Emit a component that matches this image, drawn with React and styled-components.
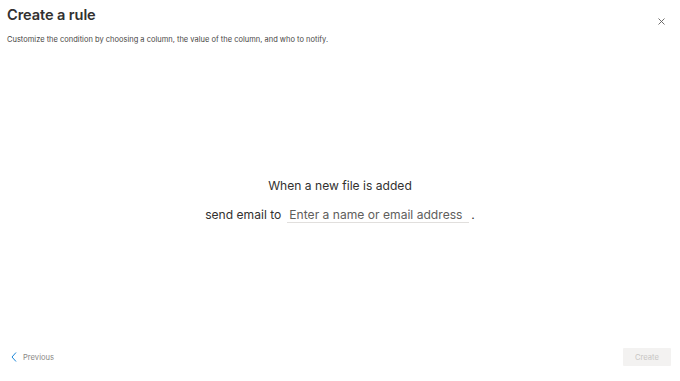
import React from 'react';
import styled, { createGlobalStyle } from 'styled-components';

const Global = createGlobalStyle`
 html, body, #root { margin: 0; padding: 0; height: 100%; }
 body { background: #fff; font-family: Inter, "Noto Sans", sans-serif; color: #323130; }
 * { box-sizing: border-box; }
`;

const Panel = styled.div`
 display: flex;
 flex-direction: column;
 height: 100vh;
`;

const Header = styled.div`
 display: flex;
 justify-content: space-between;
 align-items: flex-start;
 padding: 5px 14px 0 7px;
`;

const Title = styled.h1`
 margin: 0;
 font-size: 14.6px;
 font-weight: 600;
 line-height: 20px;
 color: #323130;
 letter-spacing: -0.1px;
`;

const Subtitle = styled.p`
 margin: 10px 0 0;
 font-size: 7.5px;
 line-height: 10px;
 color: #484644;
`;

const CloseButton = styled.button`
 border: 0;
 background: none;
 padding: 0;
 margin-top: 11px;
 width: 10px;
 height: 10px;
 display: flex;
 align-items: center;
 justify-content: center;
 cursor: pointer;
`;

const Body = styled.div`
 flex: 1;
 display: flex;
 flex-direction: column;
 align-items: center;
 justify-content: center;
 gap: 11px;
 padding-top: 7px;
`;

const Sentence = styled.div`
 display: flex;
 align-items: baseline;
 font-size: 12.1px;
 line-height: 18px;
 color: #323130;
`;

const EmailInput = styled.input`
 margin: 0 2px 0 6px;
 width: 182px;
 height: 16px;
 border: 0;
 border-bottom: 1px solid #e1dfdd;
 padding: 0 2px;
 font: inherit;
 font-size: 12.1px;
 line-height: 15px;
 color: #323130;
 outline: none;
 &::placeholder { color: #605e5c; }
`;

const Footer = styled.div`
 display: flex;
 justify-content: space-between;
 align-items: center;
 padding: 0 9px 15px 11px;
`;

const BackLink = styled.button`
 display: flex;
 align-items: center;
 gap: 6px;
 border: 0;
 background: none;
 padding: 0;
 font: inherit;
 font-size: 7.6px;
 color: #8a8886;
 cursor: pointer;
`;

const PrimaryButton = styled.button`
 width: 48px;
 height: 18px;
 border: 0;
 border-radius: 1px;
 background: #f3f2f1;
 color: #c8c6c4;
 font: inherit;
 font-size: 7.6px;
`;

export default function App() {
 return (
    <Panel>
      <Global />
      <Header>
        <div>
          <Title>Create a rule</Title>
          <Subtitle>Customize the condition by choosing a column, the value of the column, and who to notify.</Subtitle>
        </div>
        <CloseButton aria-label="Close">
          <svg width="7" height="7" viewBox="0 0 7 7">
            <path d="M0.5 0.5 L6.5 6.5 M6.5 0.5 L0.5 6.5" stroke="#605e5c" strokeWidth="0.9" />
          </svg>
        </CloseButton>
      </Header>
      <Body>
        <Sentence>When a new file is added</Sentence>
        <Sentence>
          send email to
          <EmailInput placeholder="Enter a name or email address" />
          .
        </Sentence>
      </Body>
      <Footer>
        <BackLink>
          <svg width="6" height="10" viewBox="0 0 6 10">
            <path d="M5 0.5 L1 5 L5 9.5" fill="none" stroke="#0078d4" strokeWidth="0.9" />
          </svg>
          Previous
        </BackLink>
        <PrimaryButton disabled>Create</PrimaryButton>
      </Footer>
    </Panel>
 );
}
